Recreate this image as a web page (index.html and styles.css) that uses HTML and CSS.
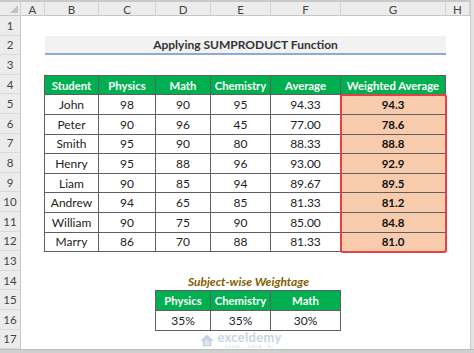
FILE: index.html
```html
<!DOCTYPE html>
<html>
<head>
<meta charset="utf-8">
<link rel="stylesheet" href="styles.css">
</head>
<body>
<div class="sheet">
  <div class="corner"><span class="tri"></span></div>
  <div class="ch">A</div><div class="ch">B</div><div class="ch">C</div><div class="ch">D</div>
  <div class="ch">E</div><div class="ch">F</div><div class="ch">G</div><div class="ch">H</div>
  <div class="scroll-v"></div>

  <div class="rh r1">1</div><div class="rh r2">2</div><div class="rh r3">3</div><div class="rh r4">4</div>
  <div class="rh r5">5</div><div class="rh r6">6</div><div class="rh r7">7</div><div class="rh r8">8</div>
  <div class="rh r9">9</div><div class="rh r10">10</div><div class="rh r11">11</div><div class="rh r12">12</div>
  <div class="rh r13">13</div><div class="rh r14">14</div><div class="rh r15">15</div><div class="rh r16">16</div>
  <div class="rh r17">17</div>

  <div class="title">Applying SUMPRODUCT Function</div>

  <div class="main-wrap">
    <table class="main">
      <colgroup><col class="cb"><col class="cc"><col class="cd"><col class="ce"><col class="cf"><col class="cg"></colgroup>
      <tr class="hd"><td>Student</td><td>Physics</td><td>Math</td><td>Chemistry</td><td>Average</td><td>Weighted Average</td></tr>
      <tr><td>John</td><td>98</td><td>90</td><td>95</td><td>94.33</td><td class="wa">94.3</td></tr>
      <tr><td>Peter</td><td>90</td><td>96</td><td>45</td><td>77.00</td><td class="wa">78.6</td></tr>
      <tr><td>Smith</td><td>95</td><td>90</td><td>80</td><td>88.33</td><td class="wa">88.8</td></tr>
      <tr><td>Henry</td><td>95</td><td>88</td><td>96</td><td>93.00</td><td class="wa">92.9</td></tr>
      <tr><td>Liam</td><td>90</td><td>85</td><td>94</td><td>89.67</td><td class="wa">89.5</td></tr>
      <tr><td>Andrew</td><td>94</td><td>65</td><td>85</td><td>81.33</td><td class="wa">81.2</td></tr>
      <tr><td>William</td><td>90</td><td>75</td><td>90</td><td>85.00</td><td class="wa">84.8</td></tr>
      <tr><td>Marry</td><td>86</td><td>70</td><td>88</td><td>81.33</td><td class="wa">81.0</td></tr>
    </table>
    <div class="hilite"></div>
  </div>

  <div class="caption">Subject-wise Weightage</div>

  <table class="weights">
    <colgroup><col class="cd"><col class="ce"><col class="cf"></colgroup>
    <tr class="hd"><td>Physics</td><td>Chemistry</td><td>Math</td></tr>
    <tr><td>35%</td><td>35%</td><td>30%</td></tr>
  </table>

  <div class="watermark">
    <svg class="wm-icon" width="16" height="14" viewBox="0 0 18 16"><path d="M1 9 L9 2 L17 9 L14 9 L14 15 L4 15 L4 9 Z" fill="#bcc8dd"/><path d="M6 10 L9 7 L12 10 L12 14 L6 14 Z" fill="#dbe2ee"/></svg>
    <div class="wm-text"><span class="wm-name">exceldemy</span><span class="wm-sub">EXCEL · DATA · BI</span></div>
  </div>

  <div class="hbar"></div>
</div>
</body>
</html>
```
FILE: styles.css
```css
html, body { margin: 0; padding: 0; background: #fff; }
body { width: 474px; height: 353px; overflow: hidden; font-family: Lato, "Open Sans", sans-serif; }

.sheet {
  display: grid;
  grid-template-columns: 21px 24px 54px 57px 55px 60px 70px 105px 24px 4px;
  grid-template-rows: 16px repeat(17, 19.6px) 1fr;
  width: 474px;
  height: 353px;
  position: relative;
}

.corner {
  grid-column: 1; grid-row: 1;
  background: #ececec;
  border-top: 2px solid #c9c9c9;
  border-bottom: 1px solid #c6c6c6;
  border-right: 1px solid #d2d2d2;
  box-sizing: border-box;
  position: relative;
}
.tri {
  position: absolute; right: 2px; bottom: 2px;
  width: 0; height: 0;
  border-left: 8px solid transparent;
  border-bottom: 8px solid #c2c2c2;
}
.ch {
  grid-row: 1;
  background: #ececec;
  border-top: 2px solid #c9c9c9;
  border-bottom: 1px solid #c6c6c6;
  border-right: 1px solid #d4d4d4;
  box-sizing: border-box;
  color: #444;
  font-size: 11.5px;
  display: flex; align-items: center; justify-content: center;
  padding-top: 1px;
}
.scroll-v {
  grid-column: 10; grid-row: 1 / 19;
  background: #e3e3e3;
  border-left: 1px solid #c9c9c9;
}

.rh {
  grid-column: 1;
  background: #ececec;
  border-bottom: 1px solid #d9d9d9;
  border-right: 1px solid #c6c6c6;
  box-sizing: border-box;
  color: #444;
  font-size: 11.5px;
  display: flex; align-items: center; justify-content: center;
}
.r1 { grid-row: 2; } .r2 { grid-row: 3; } .r3 { grid-row: 4; } .r4 { grid-row: 5; }
.r5 { grid-row: 6; } .r6 { grid-row: 7; } .r7 { grid-row: 8; } .r8 { grid-row: 9; }
.r9 { grid-row: 10; } .r10 { grid-row: 11; } .r11 { grid-row: 12; } .r12 { grid-row: 13; }
.r13 { grid-row: 14; } .r14 { grid-row: 15; } .r15 { grid-row: 16; } .r16 { grid-row: 17; }
.r17 { grid-row: 18; }

.title {
  grid-column: 3 / 9; grid-row: 3;
  background: #f2f2f2;
  border-bottom: 2px solid #8ea9db;
  box-sizing: border-box;
  color: #333;
  font-weight: bold;
  font-size: 12px;
  display: flex; align-items: center; justify-content: center;
  padding-top: 1px;
}

.main-wrap {
  grid-column: 3 / 9; grid-row: 5 / 14;
  position: relative;
}
table {
  border-collapse: collapse;
  table-layout: fixed;
  font-size: 12px;
  color: #222;
}
table.main { width: 402px; height: 177px; margin-left: -1px; }
col.cb { width: 54px; } col.cc { width: 57px; } col.cd { width: 55px; }
col.ce { width: 60px; } col.cf { width: 70px; } col.cg { width: 105px; }
td {
  border: 1px solid #5f5f5f;
  text-align: center;
  padding: 0;
  height: 19.6px;
  box-sizing: border-box;
  white-space: nowrap;
}
tr.hd td {
  background: #00b050;
  color: #fff;
  font-weight: bold;
  font-size: 11.3px;
  border-color: #5f5f5f;
}
td.wa { background: #f8cbad; font-weight: bold; color: #111; font-size: 11.5px; }
.hilite {
  position: absolute;
  left: 295px; top: 19px;
  width: 107px; height: 159px;
  box-sizing: border-box;
  border: 2px solid #e2414a;
  border-radius: 3px;
  pointer-events: none;
}

.caption {
  grid-column: 5 / 8; grid-row: 15;
  color: #7f6000;
  font-weight: bold;
  font-style: italic;
  font-size: 12px;
  display: flex; align-items: center; justify-content: center;
  padding-top: 2px;
}
table.weights {
  grid-column: 5 / 8; grid-row: 16 / 18;
  width: 186px; height: 40px;
  margin-left: -1px;
}

.watermark {
  grid-column: 5 / 8; grid-row: 18;
  align-self: start;
  justify-self: center;
  display: flex; align-items: center; gap: 2px;
  margin-top: 1px;
  margin-left: -16px;
  opacity: 0.85;
}
.wm-text { display: flex; flex-direction: column; align-items: center; }
.wm-name { font-size: 13px; color: #c3cde0; font-weight: bold; letter-spacing: 0.3px; line-height: 13px; }
.wm-sub { font-size: 4px; color: #c8d1e2; letter-spacing: 1px; line-height: 5px; }

.hbar {
  grid-column: 1 / 11; grid-row: 19;
  background: #d0d0d0;
  border-top: 1px solid #bdbdbd;
}
```
